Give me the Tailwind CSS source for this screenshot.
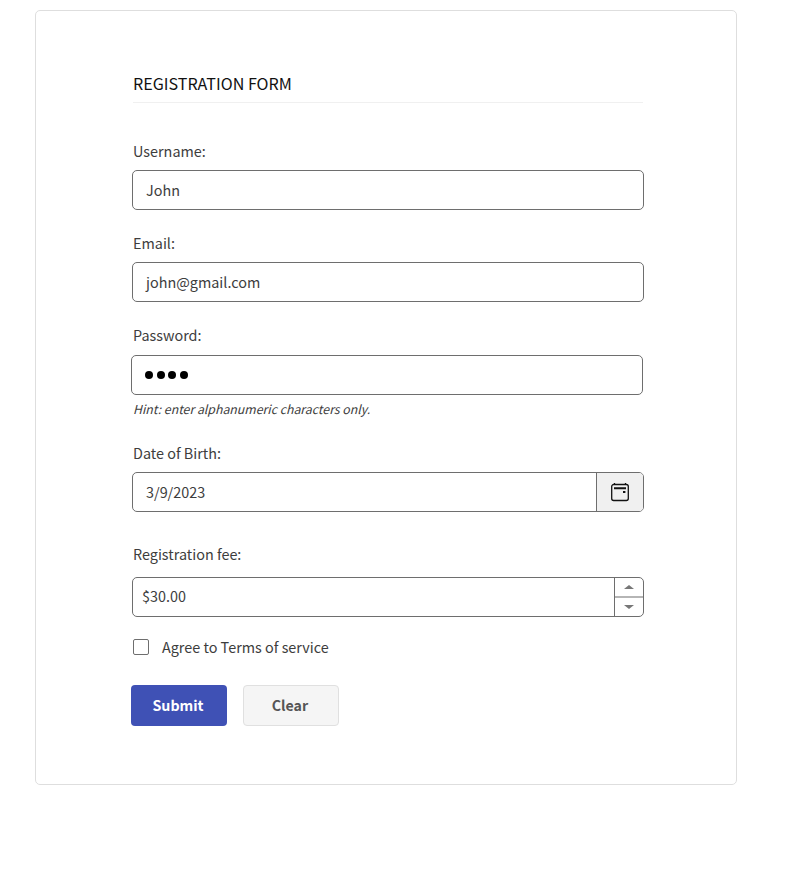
<!DOCTYPE html>
<html lang="en">
<head>
  <meta charset="utf-8"/>
  <title>Registration Form</title>
  <script src="https://cdn.jsdelivr.net/npm/@tailwindcss/browser@4"></script>
</head>
<body class="bg-white font-['Noto_Sans_CJK_SC','Noto_Sans',sans-serif] text-[#3d3d3d] text-[14.4px]">
  <div class="ml-[35px] pt-[10px] w-[702px]">
    <form class="h-[775px] border border-[#dedede] rounded-[5px] pl-[97px] pr-[93px] pt-[60px]">
      <h1 class="h-[32px] leading-[25px] text-[16.1px] text-[#111] border-b border-[#f0f0f0]">REGISTRATION FORM</h1>

      <label class="block mt-[36px] h-[24px] leading-[24px]">Username:</label>
      <div class="-ml-[1px] mt-[7px] h-[40px] w-[512px] border border-[#6e6e6e] rounded-[5px] pl-[13px] leading-[38px]">John</div>

      <label class="block mt-[22px] h-[24px] leading-[22px]">Email:</label>
      <div class="-ml-[1px] mt-[6px] h-[40px] w-[512px] border border-[#6e6e6e] rounded-[5px] pl-[13px] leading-[38px]">john@gmail.com</div>

      <label class="block mt-[22px] h-[24px] leading-[22px]">Password:</label>
      <div class="-ml-[2px] mt-[7px] h-[40px] w-[512px] border border-[#6e6e6e] rounded-[5px] pl-[13px] flex items-center gap-[3.5px]">
        <span class="w-[8px] h-[8px] rounded-full bg-black"></span>
        <span class="w-[8px] h-[8px] rounded-full bg-black"></span>
        <span class="w-[8px] h-[8px] rounded-full bg-black"></span>
        <span class="w-[8px] h-[8px] rounded-full bg-black"></span>
      </div>
      <p class="mt-[4px] h-[20px] leading-[20px] text-[12.3px] italic">Hint: enter alphanumeric characters only.</p>

      <label class="block mt-[22px] h-[24px] leading-[24px]">Date of Birth:</label>
      <div class="-ml-[1px] mt-[7px] h-[40px] w-[512px] border border-[#6e6e6e] rounded-[5px] flex overflow-hidden">
        <div class="flex-1 pl-[13px] leading-[38px]">3/9/2023</div>
        <div class="w-[47px] border-l border-[#6e6e6e] bg-[#f0f0f0] flex items-center justify-center">
          <svg width="20" height="20" viewBox="0 0 20 20" fill="none" stroke="#111">
            <path d="M4.5 1V3M15.5 1V3" stroke-width="1.3"/>
            <rect x="1.7" y="2.5" width="16.6" height="16" rx="2" stroke-width="1.3"/>
            <path d="M4 6.2h12" stroke-width="2"/>
            <rect x="13" y="9" width="2.4" height="2" fill="#111" stroke="none"/>
          </svg>
        </div>
      </div>

      <label class="block mt-[30px] h-[24px] leading-[24px]">Registration fee:</label>
      <div class="-ml-[1px] mt-[11px] h-[40px] w-[512px] border border-[#6e6e6e] rounded-[5px] flex overflow-hidden">
        <div class="flex-1 pl-[9px] leading-[36px]">$30.00</div>
        <div class="w-[29px] border-l border-[#6e6e6e] flex flex-col">
          <div class="flex-1 flex items-center justify-center border-b-2 border-[#b5b5b5]">
            <span class="w-0 h-0 border-x-[5px] border-x-transparent border-b-[4px] border-b-[#777]"></span>
          </div>
          <div class="flex-1 flex items-center justify-center">
            <span class="w-0 h-0 border-x-[5px] border-x-transparent border-t-[4px] border-t-[#777]"></span>
          </div>
        </div>
      </div>

      <div class="mt-[18px] h-[24px] flex items-center">
        <span class="w-[16px] h-[16px] border border-[#6e6e6e] rounded-[2px]"></span>
        <span class="ml-[13px] leading-[24px]">Agree to Terms of service</span>
      </div>

      <div class="-ml-[2px] mt-[26px] flex gap-[16px]">
        <button type="button" class="w-[96px] h-[41px] pr-[2px] pt-[1px] rounded-[4px] bg-[#3f51b5] text-white font-semibold text-[14.2px]">Submit</button>
        <button type="button" class="w-[96px] h-[41px] pr-[2px] pt-[1px] rounded-[4px] bg-[#f5f5f5] border border-[#e0e0e0] text-[#555] font-semibold text-[14.2px]">Clear</button>
      </div>
    </form>
  </div>
</body>
</html>
